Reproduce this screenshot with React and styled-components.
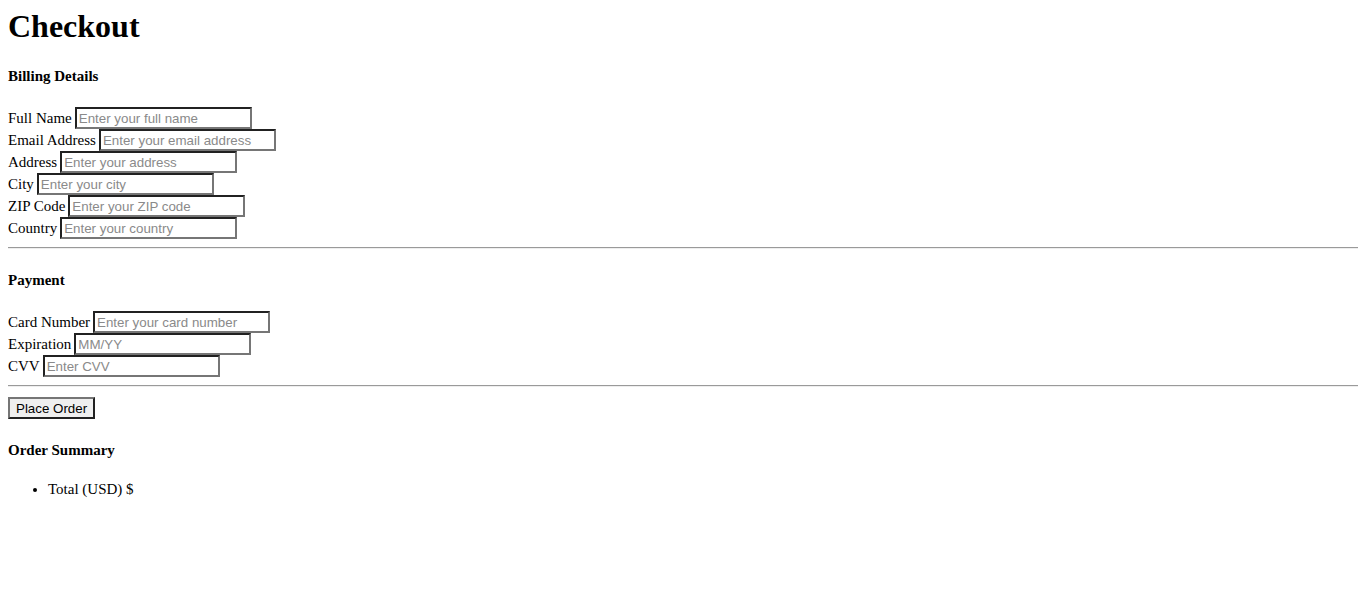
import React from 'react';
import styled, { createGlobalStyle } from 'styled-components';

const GlobalStyle = createGlobalStyle`
  body {
    margin: 8px;
    font-family: "Liberation Serif", "Times New Roman", serif;
    font-size: 16px;
    color: #000;
    background: #fff;
  }
`;

const Title = styled.h1`
  font-size: 32px;
  line-height: 37px;
  font-weight: bold;
  margin: 0 0 21px;
`;

const SectionTitle = styled.h4`
  font-size: 15px;
  line-height: 18px;
  font-weight: bold;
  margin: 22px 0;
`;

const Row = styled.div`
  display: flex;
  align-items: center;
  height: 22px;
`;

const Label = styled.label`
  font-size: 15px;
`;

const Input = styled.input`
  box-sizing: border-box;
  font-family: "Liberation Sans", Arial, sans-serif;
  font-size: 13.33px;
  height: 22px;
  padding: 1px 2px;
  border: 2px inset #767676;
  width: 177px;
  margin-left: 3px;

  &::placeholder {
    color: #8a8a8a;
  }
`;

const Rule = styled.hr`
  margin: 8px 0;
  border: none;
  border-top: 1px solid #9a9a9a;
  border-bottom: 1px solid #eee;
`;

const Button = styled.button`
  box-sizing: border-box;
  height: 22px;
  margin-top: 2px;
  font-family: "Liberation Sans", Arial, sans-serif;
  font-size: 13.33px;
  padding: 1px 6px;
  border: 2px outset #767676;
  background: #efefef;
  color: #000;
`;

const List = styled.ul`
  margin: 22px 0;
  padding-left: 40px;
  font-size: 15px;
`;

const billing = [
  ['Full Name', 'Enter your full name'],
  ['Email Address', 'Enter your email address'],
  ['Address', 'Enter your address'],
  ['City', 'Enter your city'],
  ['ZIP Code', 'Enter your ZIP code'],
  ['Country', 'Enter your country'],
];

const payment = [
  ['Card Number', 'Enter your card number'],
  ['Expiration', 'MM/YY'],
  ['CVV', 'Enter CVV'],
];

const Field = ({ label, placeholder }) => (
  <Row>
    <Label>{label}</Label>
    <Input type="text" placeholder={placeholder} />
  </Row>
);

export default function App() {
  return (
    <>
      <GlobalStyle />
      <Title>Checkout</Title>
      <SectionTitle>Billing Details</SectionTitle>
      {billing.map(([l, p]) => (
        <Field key={l} label={l} placeholder={p} />
      ))}
      <Rule />
      <SectionTitle>Payment</SectionTitle>
      {payment.map(([l, p]) => (
        <Field key={l} label={l} placeholder={p} />
      ))}
      <Rule />
      <Button>Place Order</Button>
      <SectionTitle>Order Summary</SectionTitle>
      <List>
        <li>Total (USD) $</li>
      </List>
    </>
  );
}
